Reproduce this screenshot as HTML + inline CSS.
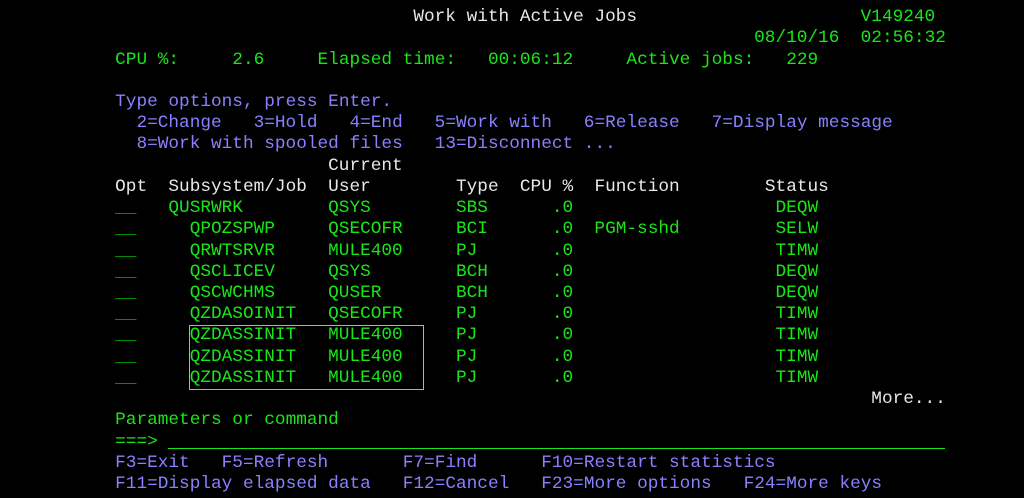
<!DOCTYPE html>
<html><head><meta charset="utf-8"><style>
html,body{margin:0;padding:0;background:#000;}
body{width:1024px;height:496px;position:relative;overflow:hidden;font-family:"Liberation Mono","DejaVu Sans Mono",monospace;font-size:17.75px;line-height:21px;}
#s{position:absolute;left:0;top:1.5px;width:1024px;height:496px;}
span{position:absolute;white-space:pre;}
.g{color:#19e619}.b{color:#8a80ff}.w{color:#e8e8e8}.u{color:#00a800}
</style></head><body><div id="s">
<span class="w" style="left:413.35px;top:5.5px">Work with Active Jobs</span>
<span class="g" style="left:860.65px;top:5.5px">V149240</span>
<span class="g" style="left:754.15px;top:26.7px">08/10/16  02:56:32</span>
<span class="g" style="left:115.15px;top:48px">CPU %:     2.6     Elapsed time:   00:06:12     Active jobs:   229</span>
<span class="b" style="left:115.15px;top:90.4px">Type options, press Enter.</span>
<span class="b" style="left:136.45px;top:111.7px">2=Change   3=Hold   4=End   5=Work with   6=Release   7=Display message</span>
<span class="b" style="left:136.45px;top:132.9px">8=Work with spooled files   13=Disconnect ...</span>
<span class="w" style="left:328.15px;top:154.1px">Current</span>
<span class="w" style="left:115.15px;top:175.3px">Opt  Subsystem/Job  User        Type  CPU %  Function        Status</span>

<span class="u" style="left:115.15px;top:196.6px">__</span><span class="g" style="left:168.4px;top:196.6px">QUSRWRK</span><span class="g" style="left:328.15px;top:196.6px">QSYS        SBS      .0                   DEQW</span>
<span class="u" style="left:115.15px;top:217.8px">__</span><span class="g" style="left:189.7px;top:217.8px">QPOZSPWP</span><span class="g" style="left:328.15px;top:217.8px">QSECOFR     BCI      .0  PGM-sshd         SELW</span>
<span class="u" style="left:115.15px;top:239px">__</span><span class="g" style="left:189.7px;top:239px">QRWTSRVR</span><span class="g" style="left:328.15px;top:239px">MULE400     PJ       .0                   TIMW</span>
<span class="u" style="left:115.15px;top:260.3px">__</span><span class="g" style="left:189.7px;top:260.3px">QSCLICEV</span><span class="g" style="left:328.15px;top:260.3px">QSYS        BCH      .0                   DEQW</span>
<span class="u" style="left:115.15px;top:281.5px">__</span><span class="g" style="left:189.7px;top:281.5px">QSCWCHMS</span><span class="g" style="left:328.15px;top:281.5px">QUSER       BCH      .0                   DEQW</span>
<span class="u" style="left:115.15px;top:302.7px">__</span><span class="g" style="left:189.7px;top:302.7px">QZDASOINIT</span><span class="g" style="left:328.15px;top:302.7px">QSECOFR     PJ       .0                   TIMW</span>
<span class="u" style="left:115.15px;top:323.9px">__</span><span class="g" style="left:189.7px;top:323.9px">QZDASSINIT</span><span class="g" style="left:328.15px;top:323.9px">MULE400     PJ       .0                   TIMW</span>
<span class="u" style="left:115.15px;top:345.2px">__</span><span class="g" style="left:189.7px;top:345.2px">QZDASSINIT</span><span class="g" style="left:328.15px;top:345.2px">MULE400     PJ       .0                   TIMW</span>
<span class="u" style="left:115.15px;top:366.4px">__</span><span class="g" style="left:189.7px;top:366.4px">QZDASSINIT</span><span class="g" style="left:328.15px;top:366.4px">MULE400     PJ       .0                   TIMW</span>

<div style="position:absolute;left:189px;top:323.5px;width:233px;height:63px;border:1px solid #b0b0b0;"></div>

<span class="w" style="left:871.3px;top:387.6px">More...</span>
<span class="g" style="left:115.15px;top:408.9px">Parameters or command</span>
<span class="g" style="left:115.15px;top:430.1px">===&gt;</span>
<div style="position:absolute;left:168px;top:446.5px;width:777px;height:1px;background:#19e619;"></div>
<span class="b" style="left:115.15px;top:451.3px">F3=Exit   F5=Refresh       F7=Find      F10=Restart statistics</span>
<span class="b" style="left:115.15px;top:472.6px">F11=Display elapsed data   F12=Cancel   F23=More options   F24=More keys</span>
</div></body></html>
